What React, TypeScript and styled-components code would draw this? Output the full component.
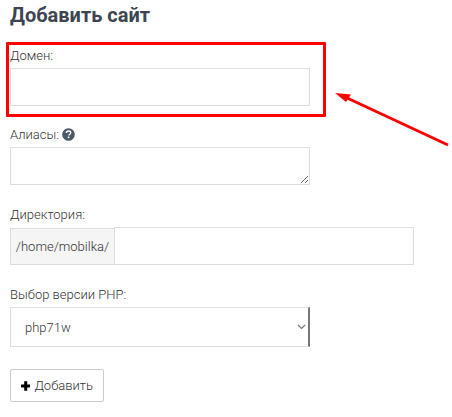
import { FC, ReactNode } from "react"
import styled, { createGlobalStyle } from "styled-components"

const GlobalStyle = createGlobalStyle`
    html, body {
        margin: 0;
        padding: 0;
        background: #fff;
    }

    body {
        font-family: Roboto, "Liberation Sans", sans-serif;
        font-size: 13px;
        font-weight: 300;
        color: #333;
    }
`;

interface FieldProps {
    label: ReactNode
    children: ReactNode
    spacing: number
}

const Field: FC<FieldProps> = ({ label, children, spacing }) => (
    <FieldRow $spacing={spacing}>
        <Label>{label}</Label>
        {children}
    </FieldRow>
);

export default function App() {
    return (
        <>
            <GlobalStyle />
            <Page>
                <Title>Добавить сайт</Title>
                <Field label="Домен:" spacing={21}>
                    <TextInput />
                </Field>
                <Field label={<>Алиасы: <HelpIcon /></>} spacing={22}>
                    <TextArea />
                </Field>
                <Field label="Директория:" spacing={22}>
                    <InputGroup>
                        <Addon>/home/mobilka/</Addon>
                        <GroupInput />
                    </InputGroup>
                </Field>
                <Field label="Выбор версии PHP:" spacing={22}>
                    <SelectWrap>
                        <SelectBox defaultValue="php71w">
                            <option>php71w</option>
                        </SelectBox>
                        <Chevron />
                    </SelectWrap>
                </Field>
                <AddButton type="button"><PlusIcon />Добавить</AddButton>

                <Highlight />
                <Arrow />
            </Page>
        </>
    )
}

const HelpIcon = () => (
    <HelpSvg viewBox="0 0 14 14">
        <circle cx="7" cy="7" r="6.8" fill="#4b5a69" />
        <path d="M4.7 5.4C4.8 3.9 5.8 3.2 7.1 3.2c1.3 0 2.3.8 2.3 1.9 0 1-.6 1.4-1.2 1.8-.5.3-.6.5-.6 1v.3" fill="none" stroke="#fff" strokeWidth="1.6" />
        <rect x="6.2" y="9.2" width="1.7" height="1.7" fill="#fff" />
    </HelpSvg>
);

const PlusIcon = () => (
    <PlusSvg viewBox="0 0 10 10">
        <path d="M3.4 0h3.2v3.4H10v3.2H6.6V10H3.4V6.6H0V3.4h3.4z" fill="#000" />
    </PlusSvg>
);

const Chevron = () => (
    <ChevronSvg viewBox="0 0 9 6">
        <path d="M1 1l3.5 3.5L8 1" fill="none" stroke="#777" strokeWidth="1.2" />
    </ChevronSvg>
);

const Arrow = () => (
    <ArrowSvg viewBox="0 0 120 60">
        <path d="M115 53L12 5" stroke="#ff0000" strokeWidth="3" fill="none" />
        <path d="M2 1L18 2.5L13 10z" fill="#ff0000" />
    </ArrowSvg>
);

const Page = styled.div`
    position: relative;
    width: 452px;
    height: 417px;
    padding: 0 10px;
    box-sizing: border-box;
    overflow: hidden;
`;

const Title = styled.h2`
    margin: 0 0 21px;
    padding-top: 3px;
    font-size: 20px;
    line-height: 24px;
    font-weight: 700;
    color: #3d4650;
`;

const FieldRow = styled.div<{ $spacing: number }>`
    margin-bottom: ${({ $spacing }) => $spacing}px;
`;

const Label = styled.label`
    display: flex;
    align-items: center;
    gap: 3px;
    height: 15px;
    margin-bottom: 5px;
    font-size: 13px;
    line-height: 15px;
`;

const TextInput = styled.input`
    display: block;
    width: 300px;
    height: 38px;
    box-sizing: border-box;
    border: 1px solid #ddd;
    outline: none;
    background: #fff;
`;

const TextArea = styled.textarea`
    display: block;
    width: 300px;
    height: 38px;
    margin: 0;
    padding: 0;
    box-sizing: border-box;
    border: 1px solid #ddd;
    outline: none;
    background: #fff;
`;

const InputGroup = styled.div`
    display: flex;
    width: 404px;
    height: 38px;
`;

const Addon = styled.span`
    display: flex;
    align-items: center;
    justify-content: center;
    width: 104px;
    box-sizing: border-box;
    margin-top: 1px;
    background: #f5f5f5;
    border: 1px solid #ddd;
    border-right: none;
    font-size: 13px;
`;

const GroupInput = styled.input`
    flex: 1;
    min-width: 0;
    box-sizing: border-box;
    border: 1px solid #ddd;
    outline: none;
    background: #fff;
`;

const SelectWrap = styled.div`
    position: relative;
    width: 300px;
    height: 40px;
`;

const SelectBox = styled.select`
    display: block;
    width: 100%;
    height: 100%;
    padding: 0 14px;
    box-sizing: border-box;
    appearance: none;
    border: 1px solid #ddd;
    border-right: 2px solid #777;
    border-radius: 0;
    outline: none;
    background: #fff;
    font-family: Roboto, "Liberation Sans", sans-serif;
    font-size: 13px;
    font-weight: 300;
    color: #333;
`;

const ChevronSvg = styled.svg`
    position: absolute;
    right: 4px;
    top: 17px;
    width: 9px;
    height: 6px;
`;

const AddButton = styled.button`
    display: flex;
    align-items: center;
    gap: 4px;
    width: 94px;
    height: 33px;
    padding: 0 10px;
    box-sizing: border-box;
    border: 1px solid #ccc;
    border-radius: 2px;
    background: #fff;
    font-family: Roboto, "Liberation Sans", sans-serif;
    font-size: 13px;
    font-weight: 300;
    color: #333;
`;

const HelpSvg = styled.svg`
    width: 13px;
    height: 13px;
`;

const PlusSvg = styled.svg`
    width: 10px;
    height: 10px;
`;

/* annotations drawn over the screenshot */
const Highlight = styled.div`
    position: absolute;
    left: 6px;
    top: 42px;
    width: 320px;
    height: 75px;
    box-sizing: border-box;
    border: 3px solid #ff0000;
    border-radius: 1px;
`;

const ArrowSvg = styled.svg`
    position: absolute;
    left: 333px;
    top: 92px;
    width: 120px;
    height: 60px;
`;
